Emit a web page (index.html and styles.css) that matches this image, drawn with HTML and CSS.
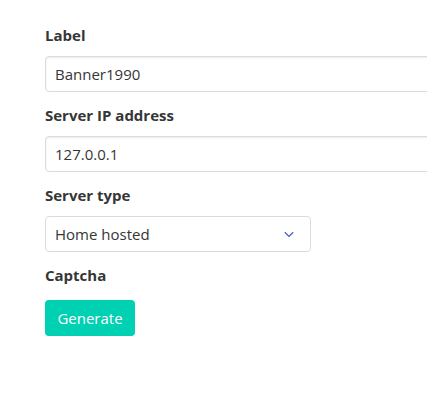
FILE: index.html
```html
<!DOCTYPE html>
<html>
<head>
<meta charset="utf-8">
<link rel="stylesheet" href="styles.css">
</head>
<body>
<form class="form">
  <div class="field">
    <label class="label">Label</label>
    <input class="input wide" type="text" value="Banner1990">
  </div>
  <div class="field">
    <label class="label">Server IP address</label>
    <input class="input wide" type="text" value="127.0.0.1">
  </div>
  <div class="field">
    <label class="label">Server type</label>
    <div class="select">
      <span class="select-text">Home hosted</span>
      <svg class="chevron" width="10" height="7" viewBox="0 0 10 7"><path d="M0.8 1.2 L5 5.4 L9.2 1.2" fill="none" stroke="#485fc7" stroke-width="1.3"/></svg>
    </div>
  </div>
  <div class="field">
    <label class="label">Captcha</label>
    <div class="control"><button class="button" type="button">Generate</button></div>
  </div>
</form>
</body>
</html>
```
FILE: styles.css
```css
html, body {
  margin: 0;
  padding: 0;
  background: #fff;
  overflow: hidden;
}
body {
  width: 427px;
  height: 413px;
  font-family: "Open Sans", "Noto Sans", sans-serif;
  color: #363636;
}
.form {
  padding: 25px 0 0 45px;
  display: flex;
  flex-direction: column;
  gap: 13px;
}
.field {
  display: flex;
  flex-direction: column;
  gap: 11px;
}
.label {
  font-size: 15px;
  font-weight: 700;
  line-height: 20px;
  color: #363636;
}
.input {
  box-sizing: border-box;
  height: 36px;
  border: 1px solid #dbdbdb;
  border-radius: 4px;
  box-shadow: inset 0 1px 2px rgba(10,10,10,0.08);
  padding: 0 9px;
  font-family: inherit;
  font-size: 15px;
  color: #363636;
  outline: none;
}
.wide {
  width: 420px;
}
.select {
  box-sizing: border-box;
  width: 266px;
  height: 36px;
  border: 1px solid #dbdbdb;
  border-radius: 4px;
  display: flex;
  align-items: center;
  justify-content: space-between;
  padding: 0 16px 0 9px;
  font-size: 15px;
}
.control {
  padding-top: 4px;
}
.button {
  height: 36px;
  width: 90px;
  border: none;
  border-radius: 4px;
  background: #00d1b2;
  color: #fff;
  font-family: inherit;
  font-size: 15px;
  padding: 0;
}
```
